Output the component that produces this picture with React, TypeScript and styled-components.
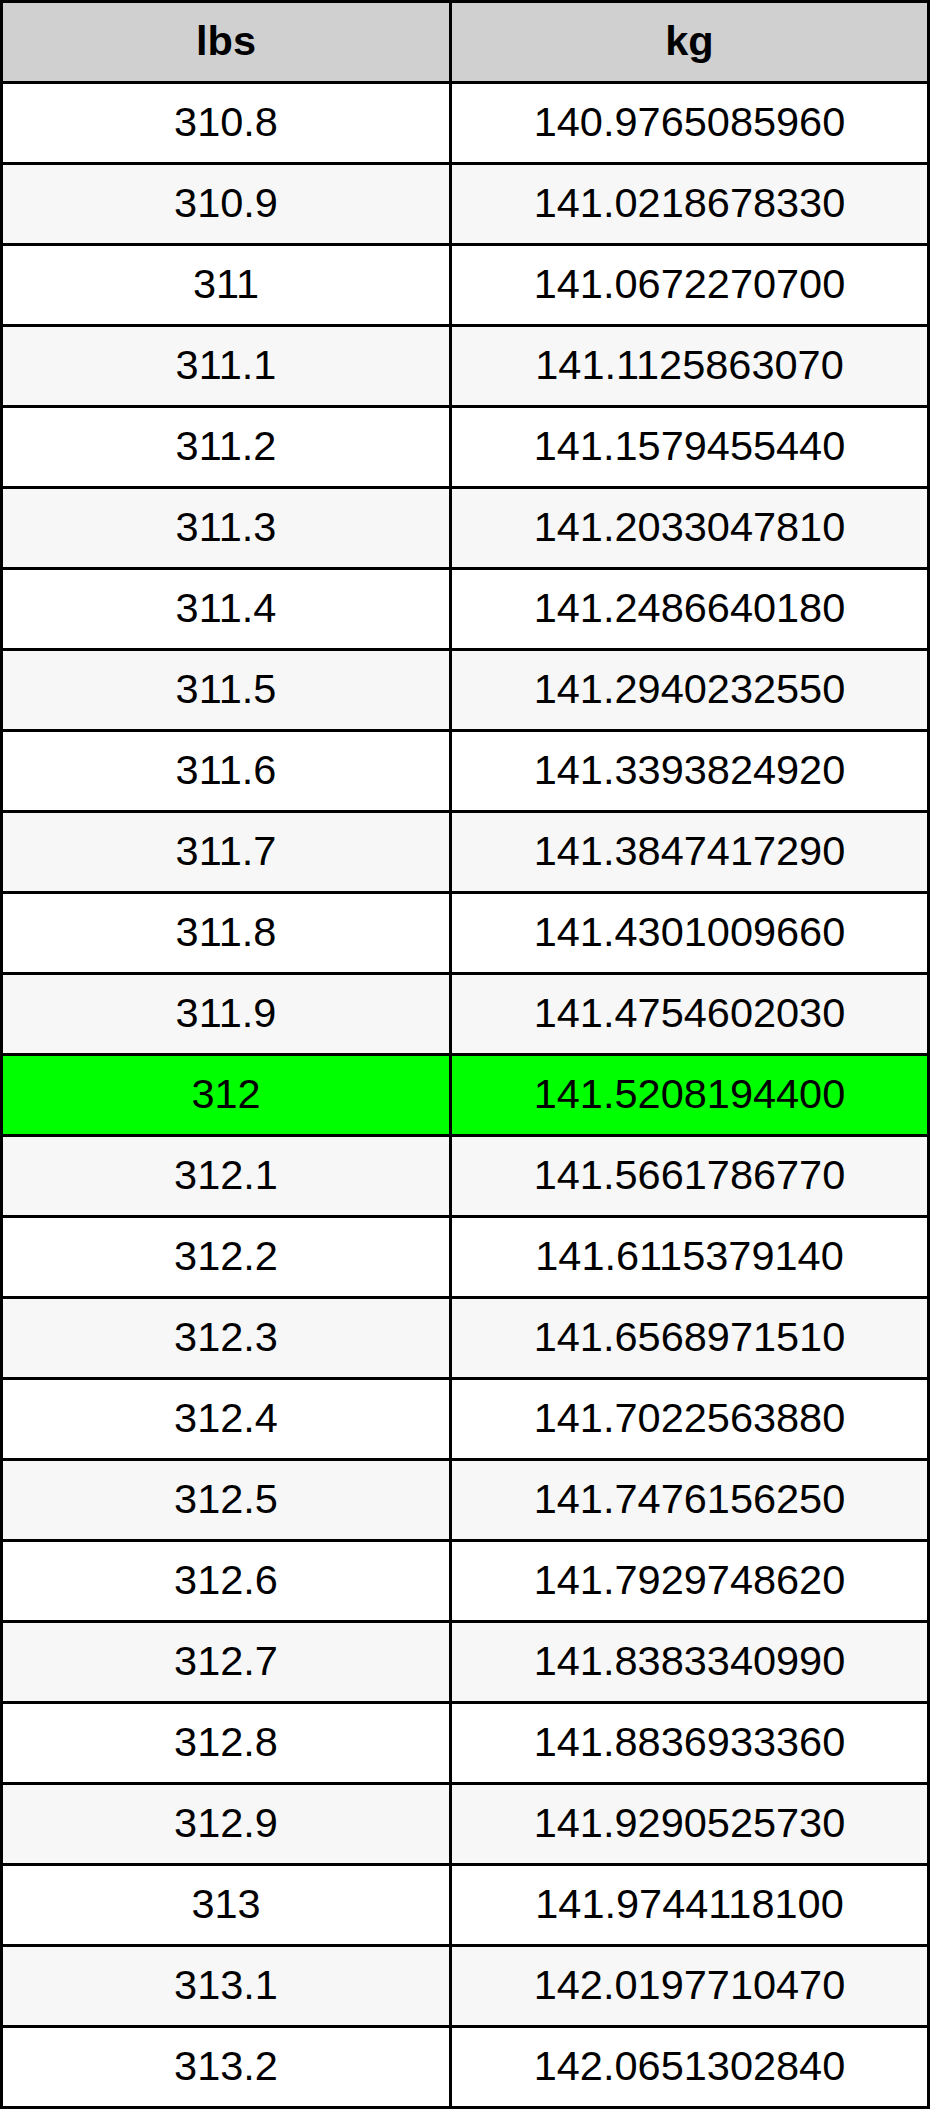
import React from "react"
import styled, { createGlobalStyle } from "styled-components"

const GlobalStyle = createGlobalStyle`
  body {
    margin: 0;
    background: #ffffff;
    font-family: "Liberation Sans", Arial, sans-serif;
  }
`

const Table = styled.div`
  display: grid;
  grid-template-columns: 446px 475px;
  gap: 3px;
  padding: 3px;
  width: 930px;
  box-sizing: border-box;
  background: #000000;
`

const Cell = styled.div<{ $bg: string; $bold?: boolean }>`
  display: flex;
  height: 78px;
  justify-content: center;
  align-items: center;
  background: ${(p) => p.$bg};
  color: #000000;
  font-size: 41.5px;
  font-weight: ${(p) => (p.$bold ? 700 : 400)};
  padding-bottom: 3px;
  box-sizing: border-box;
`

const rows: Array<[string, string]> = [
  ["310.8", "140.9765085960"],
  ["310.9", "141.0218678330"],
  ["311", "141.0672270700"],
  ["311.1", "141.1125863070"],
  ["311.2", "141.1579455440"],
  ["311.3", "141.2033047810"],
  ["311.4", "141.2486640180"],
  ["311.5", "141.2940232550"],
  ["311.6", "141.3393824920"],
  ["311.7", "141.3847417290"],
  ["311.8", "141.4301009660"],
  ["311.9", "141.4754602030"],
  ["312", "141.5208194400"],
  ["312.1", "141.5661786770"],
  ["312.2", "141.6115379140"],
  ["312.3", "141.6568971510"],
  ["312.4", "141.7022563880"],
  ["312.5", "141.7476156250"],
  ["312.6", "141.7929748620"],
  ["312.7", "141.8383340990"],
  ["312.8", "141.8836933360"],
  ["312.9", "141.9290525730"],
  ["313", "141.9744118100"],
  ["313.1", "142.0197710470"],
  ["313.2", "142.0651302840"],
]

function rowColor(lbs: string, i: number) {
  if (lbs === "312") return "#00ff00"
  return i % 2 === 0 ? "#ffffff" : "#f7f7f7"
}

export default function App() {
  return (
    <>
      <GlobalStyle />
      <Table>
        <Cell $bg="#d0d0d0" $bold>
          lbs
        </Cell>
        <Cell $bg="#d0d0d0" $bold>
          kg
        </Cell>
        {rows.map(([lbs, kg], i) => (
          <React.Fragment key={lbs}>
            <Cell $bg={rowColor(lbs, i)}>{lbs}</Cell>
            <Cell $bg={rowColor(lbs, i)}>{kg}</Cell>
          </React.Fragment>
        ))}
      </Table>
    </>
  )
}
